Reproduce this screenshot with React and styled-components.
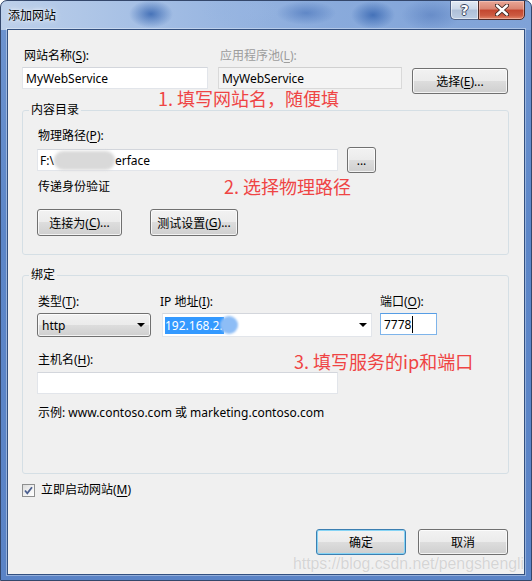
import React from 'react'
import styled, { createGlobalStyle } from 'styled-components'

const GlobalStyle = createGlobalStyle`
html, body {
    margin: 0;
    padding: 0;
    background: #ffffff;
}
body {
    font-family: "Noto Sans", "Noto Sans CJK SC", sans-serif;
    font-size: 12px;
    color: #000;
}
`

export default function App() {
  return (
    <>
      <GlobalStyle />
      <Frame>
        <TitleBar>
          <Title>添加网站</Title>
          <Caption>
            <HelpButton>?</HelpButton>
            <CloseButton>
              <svg width="14" height="12" viewBox="0 0 14 12">
                <path d="M2 1.5 L12 10.5 M12 1.5 L2 10.5" stroke="#3a2420" strokeWidth="4.2" strokeLinecap="round" />
                <path d="M2 1.5 L12 10.5 M12 1.5 L2 10.5" stroke="#ffffff" strokeWidth="2.4" strokeLinecap="round" />
              </svg>
            </CloseButton>
          </Caption>
        </TitleBar>

        <Client>
          <SiteRow>
            <Label $indent={2}>网站名称(<u>S</u>):</Label>
            <Label $indent={2} $disabled>应用程序池(<u>L</u>):</Label>
            <span />
            <TextBox>MyWebService</TextBox>
            <TextBox $disabled>MyWebService</TextBox>
            <Button $h={26} $mt={1}>选择(<u>E</u>)...</Button>
          </SiteRow>

          <Group>
            <Legend>内容目录</Legend>
            <GroupBody $pt={10} $pb={18}>
              <Label>物理路径(<u>P</u>):</Label>
              <PathRow>
                <TextBox $w={301} $pl={2}>
                  F:\<Blur />erface
                </TextBox>
                <Button $w={29} $h={26}>...</Button>
              </PathRow>
              <Label $mt={6}>传递身份验证</Label>
              <ActionRow>
                <Button $w={85} $h={27}>连接为(<u>C</u>)...</Button>
                <Button $w={88} $h={27}>测试设置(<u>G</u>)...</Button>
              </ActionRow>
            </GroupBody>
          </Group>

          <Group $mt={12}>
            <Legend>绑定</Legend>
            <GroupBody $pt={11} $pb={52}>
              <BindGrid>
                <Label>类型(<u>T</u>):</Label>
                <Label $indent={0}>IP 地址(<u>I</u>):</Label>
                <Label $indent={0}>端口(<u>O</u>):</Label>
                <Select>
                  http
                  <Arrow />
                </Select>
                <Combo>
                  <Selected>192.168.2.</Selected>
                  <Dot />
                  <Arrow />
                </Combo>
                <TextBox $w={57} $focus>
                  7778<Caret />
                </TextBox>
              </BindGrid>
              <Label $mt={15}>主机名(<u>H</u>):</Label>
              <TextBox $w={301} $mt={4} />
              <Label $mt={11}>示例: www.contoso.com 或 marketing.contoso.com</Label>
            </GroupBody>
          </Group>

          <CheckRow>
            <CheckBox>
              <svg width="11" height="11" viewBox="0 0 11 11">
                <path d="M2 5.5 L4.3 8.3 L9 2.2" fill="none" stroke="#4b5f8f" strokeWidth="1.8" />
              </svg>
            </CheckBox>
            <Label $indent={0}>立即启动网站(<u>M</u>)</Label>
          </CheckRow>

          <FooterRow>
            <Button $w={90} $h={26} $default>确定</Button>
            <Button $w={90} $h={26}>取消</Button>
          </FooterRow>

          <Note $left={150} $top={57}>1. 填写网站名，随便填</Note>
          <Note $left={216} $top={145}>2. 选择物理路径</Note>
          <Note $left={286} $top={320}>3. 填写服务的ip和端口</Note>
        </Client>

        <Watermark>https://blog.csdn.net/pengshengli</Watermark>
      </Frame>
    </>
  )
}

const Frame = styled.div`
position: relative;
box-sizing: border-box;
width: 532px;
height: 581px;
display: flex;
flex-direction: column;
padding: 0 6px 5px 6px;
border: 1px solid #34476b;
border-radius: 7px 7px 0 0;
overflow: hidden;
background:
    radial-gradient(ellipse 22px 14px at 150px 13px, rgba(40, 90, 170, 0.75), transparent),
    radial-gradient(ellipse 30px 12px at 305px 12px, rgba(60, 105, 180, 0.55), transparent),
    radial-gradient(ellipse 22px 14px at 372px 14px, rgba(40, 90, 170, 0.7), transparent),
    radial-gradient(ellipse 40px 16px at 240px 10px, rgba(150, 180, 225, 0.6), transparent),
    radial-gradient(ellipse 30px 16px at 430px 14px, rgba(70, 110, 180, 0.45), transparent),
    linear-gradient(to right, #bdd0ea 0, #a2bde4 30%, #8aabdc 60%, #7fa2d7 100%) 0 0 / 100% 29px no-repeat,
    linear-gradient(to bottom, #6f95d0 0, #5c86c8 40%, #5a83c6 100%);
`

const TitleBar = styled.div`
height: 28px;
display: flex;
justify-content: space-between;
align-items: flex-start;
flex-shrink: 0;
`

const Title = styled.div`
margin: 6px 0 0 1px;
line-height: 16px;
font-family: "Noto Sans CJK SC", sans-serif;
font-size: 12px;
color: #000;
text-shadow: 0 0 6px rgba(255, 255, 255, 0.9), 0 0 3px rgba(255, 255, 255, 0.8);
`

const Caption = styled.div`
display: flex;
margin-top: -1px;
`

const HelpButton = styled.div`
box-sizing: border-box;
width: 28px;
height: 20px;
display: flex;
align-items: center;
justify-content: center;
border: 1px solid #4f6287;
border-right: none;
border-radius: 0 0 0 5px;
background: linear-gradient(to bottom, #e3eaf4 0, #ccd8e8 45%, #aebfd8 50%, #bccde4 100%);
box-shadow: inset 0 0 0 1px rgba(255, 255, 255, 0.5);
font-family: "DejaVu Sans", sans-serif;
font-weight: bold;
font-size: 14px;
color: #fff;
text-shadow: 1px 0 0 #3b4660, -1px 0 0 #3b4660, 0 1px 0 #3b4660, 0 -1px 0 #3b4660;
`

const CloseButton = styled.div`
box-sizing: border-box;
width: 47px;
height: 20px;
display: flex;
align-items: center;
justify-content: center;
border: 1px solid #4f2a26;
border-radius: 0 0 5px 0;
background: linear-gradient(to bottom, #e9a797 0, #d98471 45%, #c4462f 50%, #cc5a41 80%, #e3876a 100%);
box-shadow: inset 0 0 0 1px rgba(255, 220, 210, 0.45);
`

const Client = styled.div`
position: relative;
flex: 1;
box-sizing: border-box;
display: flex;
flex-direction: column;
padding: 18px 15px 19px 14px;
background: #f0f0f0;
border: 1px solid #33507f;
box-shadow: 0 0 0 1px rgba(255, 255, 255, 0.35);
`

const Label = styled.div`
line-height: 16px;
height: 16px;
white-space: nowrap;
padding-left: ${p => (p.$indent ?? 1)}px;
margin-top: ${p => p.$mt || 0}px;
color: ${p => (p.$disabled ? '#9d9d9d' : '#000')};
u {
    text-decoration-thickness: 1px;
    text-underline-offset: 2px;
}
`

const SiteRow = styled.div`
display: grid;
grid-template-columns: 186px 184px 96px;
grid-template-rows: 16px auto;
column-gap: 10px;
row-gap: 3px;
align-items: start;
`

const TextBox = styled.div`
box-sizing: border-box;
width: ${p => (p.$w ? p.$w + 'px' : 'auto')};
height: 22px;
margin-top: ${p => p.$mt || 0}px;
padding-left: ${p => p.$pl ?? 3}px;
display: flex;
align-items: center;
white-space: nowrap;
background: ${p => (p.$disabled ? '#f4f4f4' : '#ffffff')};
border: 1px solid ${p => (p.$focus ? '#7eb4ea' : p.$disabled ? '#d9d9d9' : '#e2e5ea')};
border-top-color: ${p => (p.$focus ? '#569de5' : p.$disabled ? '#d0d0d0' : '#d3d6dc')};
`

const Button = styled.div`
box-sizing: border-box;
width: ${p => (p.$w ? p.$w + 'px' : 'auto')};
height: ${p => p.$h}px;
margin-top: ${p => p.$mt || 0}px;
display: flex;
align-items: center;
justify-content: center;
white-space: nowrap;
border: 1px solid ${p => (p.$default ? '#3c7fb1' : '#707070')};
border-radius: 3px;
background: linear-gradient(to bottom, #f2f2f2 0, #ebebeb 50%, #dddddd 50%, #cfcfcf 100%);
box-shadow: inset 0 0 0 1px ${p => (p.$default ? '#86d4f5' : 'rgba(255, 255, 255, 0.75)')};
u {
    text-underline-offset: 2px;
}
`

const Group = styled.fieldset`
margin: ${p => p.$mt ?? 8}px 0 0;
padding: 0;
min-width: 0;
border: 1px solid #d5dfe5;
border-radius: 3px;
`

const Legend = styled.legend`
margin-left: 6px;
padding: 0 2px;
line-height: 16px;
font-size: 12px;
`

const GroupBody = styled.div`
padding: ${p => p.$pt}px 13px ${p => p.$pb}px 14px;
`

const PathRow = styled.div`
display: flex;
align-items: center;
gap: 9px;
margin-top: 3px;
`

const Blur = styled.span`
display: inline-block;
width: 61px;
height: 19px;
border-radius: 9px;
background: #d9d9d9;
filter: blur(1.5px);
`

const ActionRow = styled.div`
display: flex;
gap: 28px;
margin-top: 14px;
`

const BindGrid = styled.div`
display: grid;
grid-template-columns: 123px 220px 57px;
grid-template-rows: 16px auto;
row-gap: 3px;
align-items: start;
`

const Arrow = styled.span`
margin-left: auto;
width: 0;
height: 0;
border-left: 4px solid transparent;
border-right: 4px solid transparent;
border-top: 4px solid #000;
`

const Select = styled.div`
box-sizing: border-box;
width: 114px;
height: 24px;
display: flex;
align-items: center;
padding: 0 5px 0 4px;
border: 1px solid #707070;
border-radius: 3px;
background: linear-gradient(to bottom, #f2f2f2 0, #ebebeb 50%, #dddddd 50%, #cfcfcf 100%);
box-shadow: inset 0 0 0 1px rgba(255, 255, 255, 0.75);
`

const Combo = styled.div`
box-sizing: border-box;
width: 210px;
height: 24px;
margin-left: 2px;
display: flex;
align-items: center;
padding: 0 4px 0 2px;
background: #ffffff;
border: 1px solid #e2e5ea;
border-top-color: #d3d6dc;
`

const Selected = styled.span`
background: #3399ff;
color: #ffffff;
line-height: 17px;
padding-right: 1px;
`

const Dot = styled.span`
width: 18px;
height: 18px;
margin-left: -4px;
border-radius: 50%;
background: #8dbdf6;
filter: blur(1px);
`

const Caret = styled.span`
width: 1px;
height: 17px;
margin-left: 1px;
background: #000;
`

const CheckRow = styled.div`
display: flex;
align-items: center;
gap: 6px;
margin-top: 8px;
`

const CheckBox = styled.div`
box-sizing: border-box;
width: 13px;
height: 13px;
display: flex;
align-items: center;
justify-content: center;
border: 1px solid #8e8f8f;
background: linear-gradient(135deg, #dcdcdc 0, #f4f4f4 60%, #ffffff 100%);
`

const FooterRow = styled.div`
display: flex;
justify-content: flex-end;
gap: 12px;
margin-top: auto;
padding-right: 1px;
`

const Note = styled.div`
position: absolute;
left: ${p => p.$left}px;
top: ${p => p.$top}px;
line-height: 22px;
white-space: nowrap;
font-family: "Noto Sans CJK SC", sans-serif;
font-size: 18px;
color: #ef4444;
`

const Watermark = styled.div`
position: absolute;
left: 292px;
top: 552px;
line-height: 22px;
white-space: nowrap;
pointer-events: none;
font-family: "Liberation Sans", Arial, sans-serif;
font-size: 15.8px;
color: rgba(200, 200, 200, 0.75);
text-shadow: 0 0 1px rgba(255, 255, 255, 0.9);
`
